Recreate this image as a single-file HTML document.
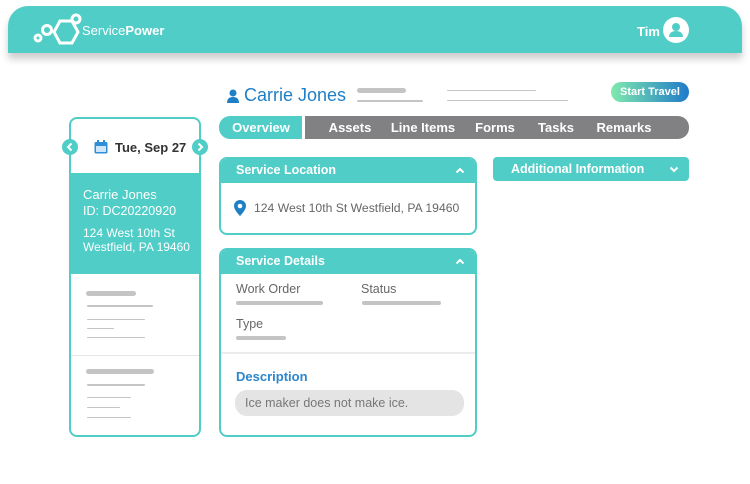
<!DOCTYPE html>
<html><head><meta charset="utf-8"><style>
*{margin:0;padding:0;box-sizing:border-box}
body{width:750px;height:484px;background:#fff;font-family:"Liberation Sans",sans-serif;position:relative;overflow:hidden}
.a{position:absolute}
.t{color:#fff}
.bar{position:absolute;background:#c4c4c4;border-radius:3px}
.card{position:absolute;border:2px solid #50cdc6;border-radius:8px;background:#fff;overflow:hidden}
.hd{background:#50cdc6;color:#fff;font-weight:bold;font-size:12.5px;height:24px;line-height:23px;padding-left:15px;position:relative}
.hd svg{position:absolute;right:10px;top:8px}
.tab{position:absolute;top:116px;height:23px;line-height:23px;color:#fff;font-size:13px;font-weight:bold;transform:translateX(-50%)}
.gray{color:#666;font-size:12.5px}
</style></head><body>
<div class="a" style="left:8px;top:6px;width:734px;height:47px;background:#50cdc6;border-radius:20px 20px 0 0;box-shadow:0 6px 8px rgba(0,0,0,0.2)"></div>
<svg class="a" style="left:28px;top:8px" width="60" height="44" viewBox="28 8 60 44">
<g fill="none" stroke="#fff" stroke-width="3">
<polygon points="60,21 72,21 78,32 72,43 60,43 54,32"/>
<circle cx="76" cy="19" r="4"/>
<circle cx="47" cy="30" r="4.5"/>
<circle cx="38" cy="38" r="3"/>
</g></svg>
<div class="a t" style="left:82px;top:23px;font-size:13px">Service<b>Power</b></div>
<div class="a t" style="left:637px;top:24px;font-size:13px;font-weight:bold">Tim</div>
<svg class="a" style="left:663px;top:17px" width="26" height="26" viewBox="0 0 26 26"><circle cx="13" cy="13" r="13" fill="#fff"/><circle cx="13" cy="10" r="4" fill="#50cdc6"/><path d="M6 20c0-4 3-6 7-6s7 2 7 6z" fill="#50cdc6"/></svg>

<svg class="a" style="left:226px;top:89px" width="14" height="14" viewBox="0 0 14 14"><circle cx="7" cy="4" r="3.5" fill="#1f7fc4"/><path d="M1 14c0-5 3-6 6-6s6 1 6 6z" fill="#1f7fc4"/></svg>
<div class="a" style="left:244px;top:85px;font-size:18px;color:#1f7fc4">Carrie Jones</div>
<div class="bar" style="left:357px;top:88px;width:49px;height:5px"></div>
<div class="bar" style="left:357px;top:100px;width:66px;height:2px"></div>
<div class="bar" style="left:447px;top:90px;width:89px;height:1px"></div>
<div class="bar" style="left:447px;top:100px;width:121px;height:1px"></div>
<div class="a t" style="left:611px;top:82px;width:78px;height:20px;border-radius:10px;background:linear-gradient(90deg,#80e9ae,#1e7bc9);font-size:11px;font-weight:bold;line-height:20px;text-align:center">Start Travel</div>

<div class="a" style="left:219px;top:116px;width:83px;height:23px;background:#50cdc6;border-radius:11px 0 0 11px"></div>
<div class="a" style="left:305px;top:116px;width:384px;height:23px;background:#818184;border-radius:0 11px 11px 0"></div>
<div class="tab" style="left:261px">Overview</div>
<div class="tab" style="left:350px">Assets</div>
<div class="tab" style="left:423px">Line Items</div>
<div class="tab" style="left:495px">Forms</div>
<div class="tab" style="left:556px">Tasks</div>
<div class="tab" style="left:624px">Remarks</div>

<div class="card" style="left:69px;top:117px;width:132px;height:320px">
<div style="height:54px"></div>
<div style="background:#50cdc6;height:101px;padding:14px 0 0 12px;color:#fff">
<div style="font-size:13px">Carrie Jones</div>
<div style="font-size:12.5px;margin-top:2px">ID: DC20220920</div>
<div style="font-size:12px;margin-top:8px;line-height:14px">124 West 10th St<br>Westfield, PA 19460</div>
</div>
<div style="position:absolute;left:0;right:0;top:236px;height:1px;background:#e6e6e6"></div>
</div>
<svg class="a" style="left:62px;top:139px" width="16" height="16" viewBox="0 0 16 16"><circle cx="8" cy="8" r="8" fill="#50cdc6"/><path d="M9.5 4.5 6 8l3.5 3.5" stroke="#fff" stroke-width="2" fill="none"/></svg>
<svg class="a" style="left:192px;top:139px" width="16" height="16" viewBox="0 0 16 16"><circle cx="8" cy="8" r="8" fill="#50cdc6"/><path d="M6.5 4.5 10 8l-3.5 3.5" stroke="#fff" stroke-width="2" fill="none"/></svg>
<svg class="a" style="left:94px;top:140px" width="14" height="14" viewBox="0 0 14 14"><rect x="0.5" y="2" width="13" height="11.5" rx="1.5" fill="#2f8fd6"/><rect x="2" y="6" width="10" height="6" fill="#cfe6f8"/><rect x="3" y="0" width="2" height="3" fill="#2f8fd6"/><rect x="9" y="0" width="2" height="3" fill="#2f8fd6"/></svg>
<div class="a" style="left:115px;top:140px;font-size:13px;font-weight:bold;color:#333">Tue, Sep 27</div>
<div class="bar" style="left:86px;top:291px;width:50px;height:5px"></div>
<div class="bar" style="left:87px;top:305px;width:66px;height:2px"></div>
<div class="bar" style="left:87px;top:319px;width:58px;height:1px"></div>
<div class="bar" style="left:87px;top:328px;width:27px;height:1px"></div>
<div class="bar" style="left:87px;top:337px;width:58px;height:1px"></div>
<div class="bar" style="left:86px;top:369px;width:68px;height:5px"></div>
<div class="bar" style="left:87px;top:384px;width:58px;height:2px"></div>
<div class="bar" style="left:87px;top:397px;width:44px;height:1px"></div>
<div class="bar" style="left:87px;top:407px;width:33px;height:1px"></div>
<div class="bar" style="left:87px;top:417px;width:44px;height:1px"></div>

<div class="card" style="left:219px;top:157px;width:258px;height:78px">
<div class="hd">Service Location<svg width="10" height="7" viewBox="0 0 10 7"><path d="M1.5 5.5 5 2l3.5 3.5" stroke="#fff" stroke-width="2" fill="none"/></svg></div>
<svg style="position:absolute;left:13px;top:41px" width="12" height="16" viewBox="0 0 12 16"><path d="M6 0C2.7 0 0 2.6 0 6c0 4 6 10 6 10s6-6 6-10C12 2.6 9.3 0 6 0z" fill="#1f7fc4"/><circle cx="6" cy="6" r="2.3" fill="#fff"/></svg>
<div class="gray" style="position:absolute;left:33px;top:42px;font-size:12.2px">124 West 10th St Westfield, PA 19460</div>
</div>

<div class="card" style="left:219px;top:248px;width:258px;height:189px">
<div class="hd">Service Details<svg width="10" height="7" viewBox="0 0 10 7"><path d="M1.5 5.5 5 2l3.5 3.5" stroke="#fff" stroke-width="2" fill="none"/></svg></div>
<div class="gray" style="position:absolute;left:15px;top:32px">Work Order</div>
<div class="gray" style="position:absolute;left:140px;top:32px">Status</div>
<div class="bar" style="left:15px;top:51px;width:87px;height:4px"></div>
<div class="bar" style="left:141px;top:51px;width:79px;height:4px"></div>
<div class="gray" style="position:absolute;left:15px;top:67px">Type</div>
<div class="bar" style="left:15px;top:86px;width:50px;height:4px"></div>
<div style="position:absolute;left:0;right:0;top:102px;height:2px;background:#ebebeb"></div>
<div style="position:absolute;left:15px;top:119px;font-size:13px;font-weight:bold;color:#2b86cc">Description</div>
<div style="position:absolute;left:14px;top:140px;width:229px;height:26px;border-radius:12px;background:#e4e4e4;color:#777;font-size:12.5px;line-height:26px;padding-left:10px">Ice maker does not make ice.</div>
</div>

<div class="a t" style="left:493px;top:157px;width:196px;height:24px;background:#50cdc6;border-radius:4px;font-size:12.5px;font-weight:bold;line-height:24px;padding-left:18px">Additional Information
<svg style="position:absolute;right:10px;top:9px" width="10" height="7" viewBox="0 0 10 7"><path d="M1.5 1.5 5 5l3.5-3.5" stroke="#fff" stroke-width="2" fill="none"/></svg></div>
</body></html>
